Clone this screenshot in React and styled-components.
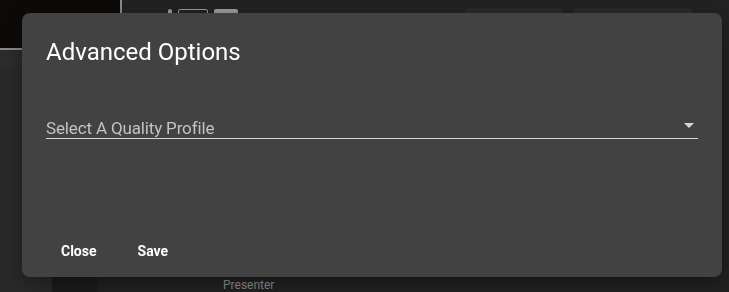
import React from "react";
import styled, { createGlobalStyle } from "styled-components";

const Global = createGlobalStyle`
  html, body { margin: 0; padding: 0; background: #212121; }
  body { font-family: Roboto, "Liberation Sans", sans-serif; overflow: hidden; }
`;

// app behind the dialog
const Page = styled.div`
  width: 729px;
  height: 292px;
  display: grid;
  grid-template-rows: 50px 1fr;
  background: #212121;
`;

const Header = styled.div`
  display: flex;
  align-items: flex-start;
  background: #222222;
`;

const Preview = styled.div`
  width: 120px;
  height: 48px;
  background: #0e0a07;
  border-right: 2px solid #8a8a8a;
  border-bottom: 2px solid #8a8a8a;
`;

const HeaderIcons = styled.div`
  display: flex;
  gap: 6px;
  margin: 9px 0 0 46px;
`;

const TinyBox = styled.div`
  width: ${(p) => p.w}px;
  height: 8px;
  border-radius: 2px;
  background: ${(p) => (p.filled ? "#9a9a9a" : "transparent")};
  border: ${(p) => (p.filled ? "none" : "1.5px solid #9a9a9a")};
`;

const HeaderButtons = styled.div`
  display: flex;
  gap: 10px;
  margin: 8px 0 0 auto;
  padding-right: 37px;
`;

const GhostButton = styled.div`
  width: ${(p) => p.w}px;
  height: 30px;
  border-radius: 4px;
  background: #2a2a2a;
`;

const Body = styled.div`
  display: grid;
  grid-template-columns: 52px 46px 1fr;
`;

const SideBar = styled.div`
  background: #292929;
  border-top: 20px solid #2c2c2c;
`;

const DarkCol = styled.div`
  background: #1b1b1b;
`;

const Main = styled.div`
  display: flex;
  flex-direction: column;
  justify-content: flex-end;
  padding: 0 0 0 125px;
  color: #8a8a8a;
  font-size: 12px;
`;

const Overlay = styled.div`
  position: fixed;
  inset: 0;
`;

const Dialog = styled.div`
  position: absolute;
  left: 22px;
  top: 13px;
  width: 700px;
  height: 264px;
  box-sizing: border-box;
  background: #424242;
  border-radius: 8px;
  box-shadow: 0 6px 20px rgba(0, 0, 0, 0.35);
  display: flex;
  flex-direction: column;
  color: #fff;
`;

const Title = styled.h2`
  margin: 0;
  padding: 23px 24px 0;
  font-size: 24px;
  line-height: 32px;
  font-weight: 400;
`;

const Content = styled.div`
  flex: 1;
  padding: 44px 24px 0;
`;

const SelectField = styled.div`
  display: flex;
  align-items: flex-end;
  justify-content: space-between;
  height: 26px;
  border-bottom: 1px solid #d6d6d6;
  color: #c2c2c2;
  font-size: 17px;
  line-height: 19px;
  letter-spacing: -0.15px;
`;

const Caret = styled.span`
  width: 0;
  height: 0;
  border-left: 5px solid transparent;
  border-right: 5px solid transparent;
  border-top: 5px solid #d6d6d6;
  margin-right: 4px;
  margin-bottom: 10px;
`;

const Actions = styled.div`
  display: flex;
  gap: 9px;
  padding: 0 8px 12px 23px;
`;

const TextButton = styled.button`
  background: none;
  border: none;
  color: #fff;
  font-family: inherit;
  font-size: 14px;
  font-weight: 700;
  padding: 6px 16px;
  border-radius: 4px;
  cursor: pointer;
`;

export default function App() {
  return (
    <>
      <Global />
      <Page>
        <Header>
          <Preview />
          <HeaderIcons>
            <TinyBox w={4} filled />
            <TinyBox w={28} />
            <TinyBox w={24} filled />
          </HeaderIcons>
          <HeaderButtons>
            <GhostButton w={98} />
            <GhostButton w={119} />
          </HeaderButtons>
        </Header>
        <Body>
          <SideBar />
          <DarkCol />
          <Main>Presenter</Main>
        </Body>
      </Page>
      <Overlay>
        <Dialog>
          <Title>Advanced Options</Title>
          <Content>
            <SelectField>
              <span>Select A Quality Profile</span>
              <Caret />
            </SelectField>
          </Content>
          <Actions>
            <TextButton>Close</TextButton>
            <TextButton>Save</TextButton>
          </Actions>
        </Dialog>
      </Overlay>
    </>
  );
}
